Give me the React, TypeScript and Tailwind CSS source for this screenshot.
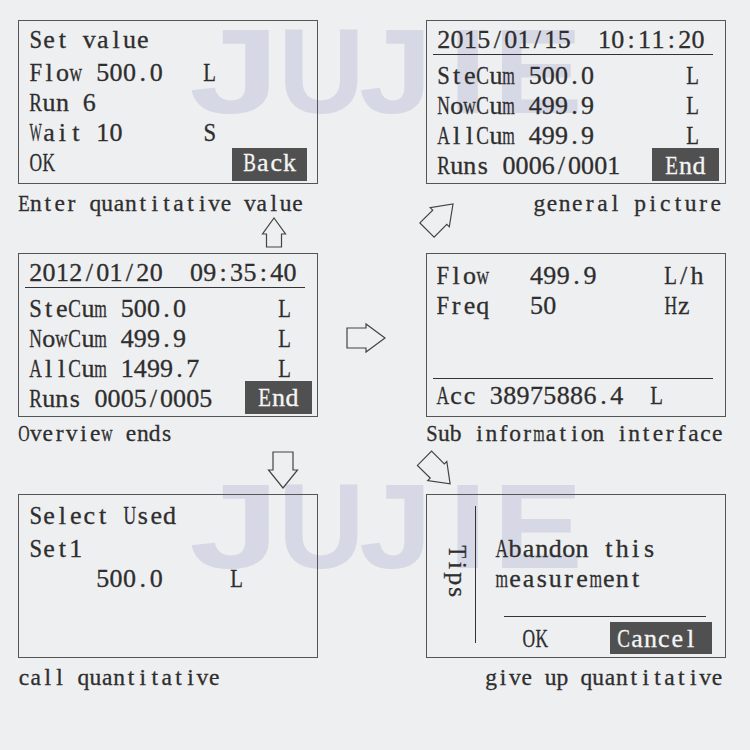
import React from "react";

const SC: Record<string, string> = {
  m: "scale-x-[0.62]",
  w: "scale-x-[0.67]",
  W: "scale-x-[0.5]",
  M: "scale-x-[0.54]",
  A: "scale-x-[0.67]",
  D: "scale-x-[0.67]",
  H: "scale-x-[0.67]",
  K: "scale-x-[0.67]",
  N: "scale-x-[0.67]",
  O: "scale-x-[0.67]",
  U: "scale-x-[0.67]",
  B: "scale-x-[0.73]",
  C: "scale-x-[0.73]",
  R: "scale-x-[0.73]",
  E: "scale-x-[0.8]",
  T: "scale-x-[0.8]",
  L: "scale-x-[0.8]",
  S: "scale-x-[0.87]",
  F: "scale-x-[0.87]",
};

const C134 = "w-[13.4px]";
const C131 = "w-[13.1px]";
const C119 = "w-[11.9px]";
const C126 = "w-[12.6px]";

function M({ t, cw }: { t: string; cw: string }) {
  return (
    <span className="inline-flex">
      {Array.from(t).map((c, i) => (
        <span
          key={i}
          className={`inline-flex shrink-0 justify-center ${cw} ${SC[c] ?? ""}`}
        >
          {c === " " ? "\u00a0" : c}
        </span>
      ))}
    </span>
  );
}

function Row({ t, cw, cls = "" }: { t: string; cw: string; cls?: string }) {
  return (
    <div className={`flex h-[30px] leading-[30px] ${cls}`}>
      <M t={t} cw={cw} />
    </div>
  );
}

const panel =
  "w-[300px] h-[164px] border border-[#555] flex text-[26px] text-[#2e2e2e] shrink-0";

const caption = "h-[30px] leading-[30px] text-[23.5px] flex";

function arrowPts(
  tx: number,
  ty: number,
  deg: number,
  L: number,
  Ls: number,
  ws: number,
  wh: number
) {
  const pts = [
    [0, -ws],
    [Ls, -ws],
    [Ls, -wh],
    [L, 0],
    [Ls, wh],
    [Ls, ws],
    [0, ws],
  ];
  const a = (deg * Math.PI) / 180;
  const c = Math.cos(a);
  const s = Math.sin(a);
  return pts
    .map(([x, y]) => `${(tx + x * c - y * s).toFixed(1)},${(ty + x * s + y * c).toFixed(1)}`)
    .join(" ");
}

function Watermark({ top }: { top: string }) {
  return (
    <div className={`absolute left-0 ${top} w-[750px] h-[130px] font-['Liberation_Sans'] font-bold text-[120px] leading-none text-[#d7d8e5] select-none [-webkit-text-stroke:0px]`}>
      <span className="absolute left-[189px] top-0 origin-left scale-x-[1.36]">J</span>
      <span className="absolute left-[278px] top-0 origin-left">U</span>
      <span className="absolute left-[359px] top-0 origin-left scale-x-[1.1]">J</span>
      <span className="absolute left-[448px] top-0 origin-left scale-x-[1.18]">I</span>
      <span className="absolute left-[493px] top-0 origin-left scale-x-[1.12]">E</span>
    </div>
  );
}

export default function App() {
  return (
    <div className="relative w-[750px] h-[750px] overflow-hidden bg-[#eeeff1] font-['Liberation_Serif'] text-[#2e2e2e] [-webkit-text-stroke:0.3px_currentColor]">
      <Watermark top="top-[11px]" />
      <Watermark top="top-[466px]" />

      <div className="relative flex flex-col pt-[20px] pl-[18px]">
        {/* Row 1 */}
        <div className="flex gap-[108px]">
          <div className="flex flex-col">
            <div className={`${panel} flex-col pt-[4px] pl-[10px] pr-[10px]`}>
              <div className="flex h-[33px] leading-[30px]">
                <M t="Set value" cw={C134} />
              </div>
              <Row t="Flow 500.0   L" cw={C134} />
              <Row t="Run 6" cw={C134} />
              <Row t="Wait 10      S" cw={C134} />
              <div className="flex items-start h-[33px]">
                <span className="leading-[30px]">
                  <M t="OK" cw={C134} />
                </span>
                <div className="ml-auto w-[75px] h-[33px] bg-[#505050] text-[#f5f5f5] flex justify-center leading-[30px]">
                  <M t="Back" cw={C134} />
                </div>
              </div>
            </div>
            <div className={`${caption} mt-[4px]`}>
              <M t="Enter quantitative value" cw={C119} />
            </div>
          </div>

          <div className="flex flex-col">
            <div className={`${panel} flex-col pt-[4px]`}>
              <div className="flex h-[29px] leading-[30px] pl-[10px]">
                <M t="2015/01/15  10:11:20" cw={C134} />
              </div>
              <div className="h-px bg-[#333] ml-[6px] mr-[12px]" />
              <Row t="SteCum 500.0       L" cw={C131} cls="pl-[10px] mt-[6px]" />
              <Row t="NowCum 499.9       L" cw={C131} cls="pl-[10px]" />
              <Row t="AllCum 499.9       L" cw={C131} cls="pl-[10px]" />
              <div className="flex items-start pl-[10px] h-[30px]">
                <span className="leading-[30px]">
                  <M t="Runs 0006/0001" cw={C131} />
                </span>
                <div className="ml-auto mr-[6px] mt-[-3px] w-[67px] h-[33px] pt-[3px] bg-[#505050] text-[#f5f5f5] flex justify-center leading-[30px]">
                  <M t="End" cw={C134} />
                </div>
              </div>
            </div>
            <div className={`${caption} mt-[4px] justify-end pr-[4px]`}>
              <M t="general picture" cw={C126} />
            </div>
          </div>
        </div>

        {/* Row 2 */}
        <div className="flex gap-[108px] mt-[35px]">
          <div className="flex flex-col">
            <div className={`${panel} flex-col pt-[4px]`}>
              <div className="flex h-[29px] leading-[30px] pl-[10px]">
                <M t="2012/01/20  09:35:40" cw={C134} />
              </div>
              <div className="h-px bg-[#333] ml-[6px] mr-[12px]" />
              <Row t="SteCum 500.0       L" cw={C131} cls="pl-[10px] mt-[6px]" />
              <Row t="NowCum 499.9       L" cw={C131} cls="pl-[10px]" />
              <Row t="AllCum 1499.7      L" cw={C131} cls="pl-[10px]" />
              <div className="flex items-start pl-[10px] h-[30px]">
                <span className="leading-[30px]">
                  <M t="Runs 0005/0005" cw={C131} />
                </span>
                <div className="ml-auto mr-[5px] mt-[-3px] w-[67px] h-[33px] pt-[2px] bg-[#505050] text-[#f5f5f5] flex justify-center leading-[30px]">
                  <M t="End" cw={C134} />
                </div>
              </div>
            </div>
            <div className={`${caption} mt-[1px]`}>
              <M t="Overview ends" cw={C119} />
            </div>
          </div>

          <div className="flex flex-col">
            <div className={`${panel} flex-col pt-[7px]`}>
              <Row t="Flow   499.9     L/h" cw={C134} cls="pl-[9px]" />
              <Row t="Freq   50        Hz" cw={C134} cls="pl-[9px]" />
              <div className="h-px bg-[#333] ml-[6px] mr-[12px] mt-[57px]" />
              <Row t="Acc 38975886.4  L" cw={C134} cls="pl-[9px] mt-[2px]" />
            </div>
            <div className={`${caption} mt-[1px] justify-end pr-[3px]`}>
              <M t="Sub information interface" cw={C119} />
            </div>
          </div>
        </div>

        {/* Row 3 */}
        <div className="flex gap-[108px] mt-[46px]">
          <div className="flex flex-col">
            <div className={`${panel} flex-col pt-[6px] pl-[10px]`}>
              <div className="flex h-[33px] leading-[30px]">
                <M t="Select Used" cw={C134} />
              </div>
              <Row t="Set1" cw={C134} />
              <Row t="     500.0     L" cw={C134} />
            </div>
            <div className={`${caption} mt-[4px]`}>
              <M t="call quantitative" cw={C119} />
            </div>
          </div>

          <div className="flex flex-col">
            <div className={`${panel} flex-row`}>
              <div className="w-[48px] shrink-0 flex items-center justify-center pl-[11px] pb-[9px]">
                <div className="rotate-90 leading-[30px] h-[30px] flex">
                  <M t="Tips" cw={C134} />
                </div>
              </div>
              <div className="w-px h-[137px] mt-[11px] bg-[#333] self-start shrink-0" />
              <div className="flex-1 flex flex-col pt-[39px]">
                <Row t="Abandon this" cw={C134} cls="pl-[19px]" />
                <Row t="measurement" cw={C134} cls="pl-[19px]" />
                <div className="h-px bg-[#333] ml-[28px] mr-[19px] mt-[22px]" />
                <div className="flex items-start mt-[5px]">
                  <span className="ml-[46px] mt-[2px] leading-[30px]">
                    <M t="OK" cw={C134} />
                  </span>
                  <div className="ml-auto mr-[13px] w-[102px] h-[32px] pt-[2px] pl-[7px] bg-[#505050] text-[#f5f5f5] flex leading-[30px]">
                    <M t="Cancel" cw={C134} />
                  </div>
                </div>
              </div>
            </div>
            <div className={`${caption} mt-[4px] justify-end pr-[3px]`}>
              <M t="give up quantitative" cw={C119} />
            </div>
          </div>
        </div>
      </div>

      <svg
        className="absolute inset-0 pointer-events-none"
        width="750"
        height="750"
        viewBox="0 0 750 750"
      >
        <g fill="none" stroke="#444" strokeWidth="1.2" strokeLinejoin="miter">
          <polygon points={arrowPts(274, 247, -90, 29, 13, 7.5, 11.5)} />
          <polygon points={arrowPts(283, 452, 90, 36, 18, 10, 14.5)} />
          <polygon points={arrowPts(347, 338, 0, 38, 19, 10, 14)} />
          <polygon points={arrowPts(427, 230, -45, 36.8, 18, 10, 13.5)} />
          <polygon points={arrowPts(424.5, 458.3, 45, 36.2, 18, 10, 13.5)} />
        </g>
      </svg>
    </div>
  );
}
